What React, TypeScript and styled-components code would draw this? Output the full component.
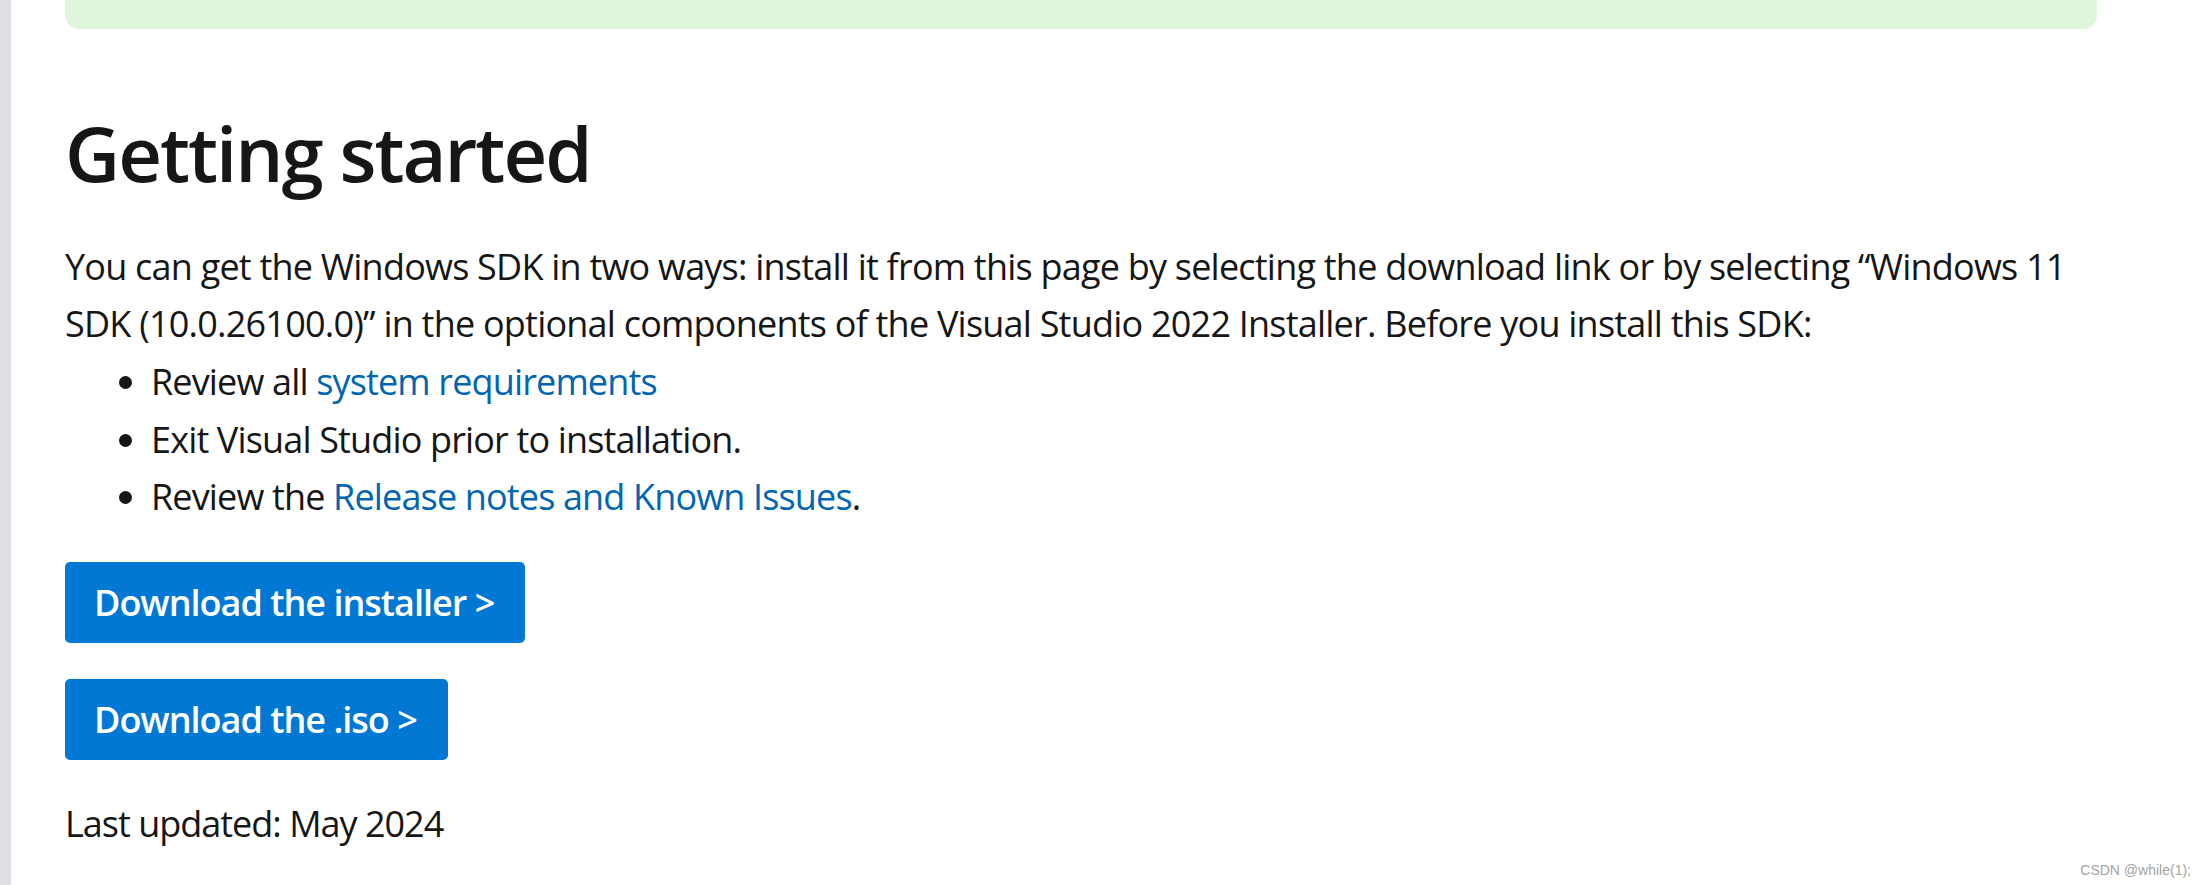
import React from 'react';
import styled, { createGlobalStyle } from 'styled-components';

const GlobalStyle = createGlobalStyle`
  html, body {
    margin: 0;
    padding: 0;
    background: #ffffff;
  }
  body {
    font-family: 'Open Sans', 'Noto Sans', sans-serif;
    color: #161616;
    overflow: hidden;
  }
`;

const Page = styled.div`
  position: relative;
  display: flex;
  width: 2206px;
  height: 885px;
  overflow: hidden;
`;

const SideEdge = styled.div`
  width: 11px;
  flex-shrink: 0;
  background: #dedfe3;
`;

const Content = styled.main`
  width: 2032px;
  padding-left: 54px;
  display: flex;
  flex-direction: column;
  align-items: flex-start;
`;

const SuccessBanner = styled.div`
  align-self: stretch;
  height: 29px;
  background: #dff6dd;
  border-radius: 0 0 14px 14px;
`;

const Heading = styled.h2`
  margin: 75px 0 35px;
  font-size: 76px;
  font-weight: 600;
  line-height: 1.3;
  letter-spacing: -2px;
  color: #161616;
`;

const Paragraph = styled.p`
  margin: 0;
  font-size: 36px;
  line-height: 57.6px;
  letter-spacing: -0.78px;
`;

const BulletList = styled.ul`
  margin: 0;
  padding-left: 86px;
  font-size: 36px;
  line-height: 57.6px;
  letter-spacing: -0.85px;
  list-style: disc;
`;

const Link = styled.a`
  color: #0065b3;
  text-decoration: none;
`;

const Buttons = styled.div`
  margin-top: 36px;
  display: flex;
  flex-direction: column;
  align-items: flex-start;
  gap: 36px;
`;

const PrimaryButton = styled.a`
  display: inline-flex;
  align-items: center;
  height: 81px;
  padding: 0 31px 0 29px;
  box-sizing: border-box;
  background: #0078d4;
  color: #ffffff;
  border-radius: 5px;
  font-size: 36px;
  font-weight: 600;
  letter-spacing: -1px;
  text-decoration: none;
`;

const Updated = styled.p`
  margin: 35px 0 0;
  font-size: 36px;
  line-height: 57.6px;
  letter-spacing: -1px;
`;

const Watermark = styled.div`
  position: absolute;
  right: 15px;
  bottom: 7px;
  font-family: 'Liberation Sans', Arial, sans-serif;
  font-size: 14px;
  color: #a3a3a3;
`;

export default function App() {
  return (
    <Page>
      <GlobalStyle />
      <SideEdge />
      <Content>
        <SuccessBanner />
        <Heading>Getting started</Heading>
        <Paragraph>
          You can get the Windows SDK in two ways: install it from this page by selecting the download link or by
          selecting “Windows 11 SDK (10.0.26100.0)” in the optional components of the Visual Studio 2022 Installer.
          Before you install this SDK:
        </Paragraph>
        <BulletList>
          <li>
            Review all <Link href="#">system requirements</Link>
          </li>
          <li>Exit Visual Studio prior to installation.</li>
          <li>
            Review the <Link href="#">Release notes and Known Issues</Link>.
          </li>
        </BulletList>
        <Buttons>
          <PrimaryButton href="#">Download the installer &gt;</PrimaryButton>
          <PrimaryButton href="#">Download the .iso &gt;</PrimaryButton>
        </Buttons>
        <Updated>Last updated: May 2024</Updated>
      </Content>
      <Watermark>CSDN @while(1);</Watermark>
    </Page>
  );
}
